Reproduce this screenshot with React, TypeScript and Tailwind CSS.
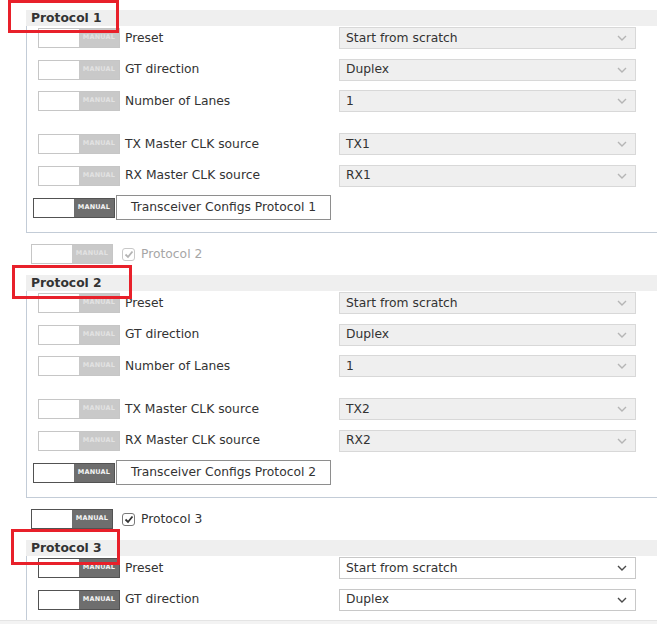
import React from "react";

function Toggle({ dark, className = "" }: { dark: boolean; className?: string }) {
  return (
    <div
      className={`flex h-[20px] w-[82px] shrink-0 ${
        dark ? "border-[1.5px] border-[#525252]" : "border border-[#c6c6c6]"
      } ${className}`}
    >
      <div className="w-[40px] bg-white" />
      <div
        className={`flex flex-1 items-center justify-center overflow-hidden text-[6.5px] font-bold tracking-[0.2px] ${
          dark ? "bg-[#6e6e6e] text-[#f4f4f4]" : "bg-[#c9c9c9] text-[#e2e2e2]"
        }`}
      >
        MANUAL
      </div>
    </div>
  );
}

function Chevron({ dark }: { dark: boolean }) {
  return (
    <svg width="10" height="6" viewBox="0 0 10 6" className="shrink-0">
      <path
        d="M1 1 L5 5 L9 1"
        fill="none"
        stroke={dark ? "#4a4a4a" : "#b5b5b5"}
        strokeWidth="1.4"
      />
    </svg>
  );
}

function Select({ value, enabled }: { value: string; enabled: boolean }) {
  return (
    <div
      className={`flex h-[22px] w-[297px] shrink-0 items-center justify-between border pl-[6px] pr-[8px] ${
        enabled ? "border-[#c8c8c8] bg-white" : "border-[#d8d8d8] bg-[#efefef]"
      }`}
    >
      <span className="text-[12.3px] text-[#333]">{value}</span>
      <Chevron dark={enabled} />
    </div>
  );
}

function Row({ label, value, enabled }: { label: string; value: string; enabled: boolean }) {
  return (
    <div className="flex h-[24px] items-center pl-[5px]">
      <Toggle dark={enabled} />
      <div className="ml-[5px] w-[214px] text-[12.3px] text-[#333]">{label}</div>
      <Select value={value} enabled={enabled} />
    </div>
  );
}

function Group({
  n,
  enabled,
  rows,
}: {
  n: number;
  enabled: boolean;
  rows: { label: string; value: string }[];
}) {
  return (
    <div className="ml-[26px]">
      <div className="flex h-[16px] items-center bg-[#efefef] pl-[5px] text-[12.3px] font-bold text-[#333]">
        Protocol {n}
      </div>
      <div className="flex flex-col border-b border-l border-[#c3ccd7] pb-[12px] pl-[6px]">
        <div className="flex flex-col gap-[7.5px]">
          {rows.slice(0, 3).map((r) => (
            <Row key={r.label} label={r.label} value={r.value} enabled={enabled} />
          ))}
        </div>
        <div className="mt-[19px] flex flex-col gap-[7.5px]">
          {rows.slice(3).map((r) => (
            <Row key={r.label} label={r.label} value={r.value} enabled={enabled} />
          ))}
        </div>
        <div className="mt-[7.5px] flex h-[25px] items-center">
          <Toggle dark />
          <div className="ml-[1px] flex h-[25px] w-[215px] items-center border border-[#8e8e8e] bg-white pl-[14px] text-[12.3px] text-[#333]">
            Transceiver Configs Protocol {n}
          </div>
        </div>
      </div>
    </div>
  );
}

function CheckRow({ n, enabled }: { n: number; enabled: boolean }) {
  return (
    <div className="mt-[11px] flex h-[20px] items-center pl-[31px]">
      <Toggle dark={enabled} />
      <div
        className={`ml-[9px] flex h-[13px] w-[13px] items-center justify-center rounded-[3px] border bg-white ${
          enabled ? "border-[#7a7a7a]" : "border-[#c8c8c8]"
        }`}
      >
        <svg width="10" height="9" viewBox="0 0 10 9">
          <path
            d="M1.5 4.5 L4 7 L8.5 1.5"
            fill="none"
            stroke={enabled ? "#333" : "#b4b4b4"}
            strokeWidth="1.8"
          />
        </svg>
      </div>
      <div className={`ml-[6px] text-[12.3px] ${enabled ? "text-[#333]" : "text-[#a6a6a6]"}`}>
        Protocol {n}
      </div>
    </div>
  );
}

const rowsFor = (n: number) => [
  { label: "Preset", value: "Start from scratch" },
  { label: "GT direction", value: "Duplex" },
  { label: "Number of Lanes", value: "1" },
  { label: "TX Master CLK source", value: `TX${n}` },
  { label: "RX Master CLK source", value: `RX${n}` },
];

export default function App() {
  return (
    <div className="relative h-[624px] w-[657px] overflow-hidden bg-white pt-[10px] font-['DejaVu_Sans',sans-serif]">
      <Group n={1} enabled={false} rows={rowsFor(1)} />
      <CheckRow n={2} enabled={false} />
      <div className="mt-[11px]">
        <Group n={2} enabled={false} rows={rowsFor(2)} />
      </div>
      <CheckRow n={3} enabled />
      <div className="mt-[11px]">
        <Group n={3} enabled rows={rowsFor(3)} />
      </div>

      <div className="absolute bottom-0 left-0 h-[4px] w-full border-t border-[#e4e4e4] bg-[#f3f3f3]" />

      <div className="absolute left-[8px] top-[0px] h-[33px] w-[111px] border-[3.5px] border-[#e8202a]" />
      <div className="absolute left-[12px] top-[265px] h-[34px] w-[120px] border-[3.5px] border-[#e8202a]" />
      <div className="absolute left-[11px] top-[529px] h-[36px] w-[109px] border-[3.5px] border-[#e8202a]" />
    </div>
  );
}
